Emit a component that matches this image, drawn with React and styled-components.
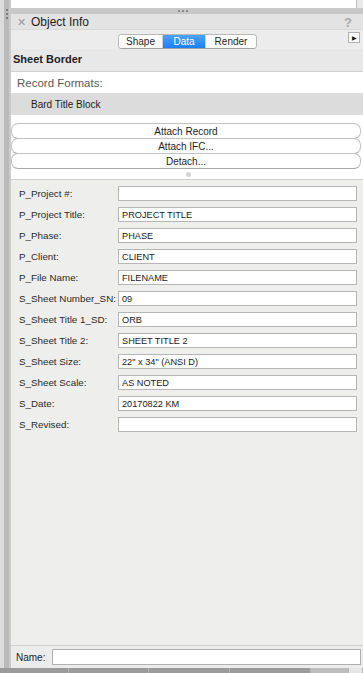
import React from 'react';
import styled, { createGlobalStyle } from 'styled-components';

const GlobalStyle = createGlobalStyle`
  html, body {
    margin: 0;
    padding: 0;
    background: #eeeeec;
  }
  body {
    font-family: "Liberation Sans", Arial, sans-serif;
    color: #222;
  }
`;

const Page = styled.div`
  width: 363px;
  height: 673px;
  display: flex;
  flex-direction: column;
  overflow: hidden;
`;

const Body = styled.div`
  flex: 1;
  display: flex;
  min-height: 0;
`;

const LeftRail = styled.div`
  width: 11px;
  flex-shrink: 0;
  background: linear-gradient(to right, #dcdcdc 0 4px, #bababa 4px 9px, #cbcbcb 9px 11px);
  display: flex;
  flex-direction: column;
  align-items: center;
  gap: 2px;
  padding-top: 9px;
  padding-left: 2px;
  box-sizing: border-box;
`;

const RailDot = styled.span`
  width: 2px;
  height: 2px;
  background: #7d7d7d;
`;

const Main = styled.div`
  flex: 1;
  display: flex;
  flex-direction: column;
  background: #eeeeec;
`;

const TopStub = styled.div`
  height: 8px;
  display: flex;
  background: #e9e9e9;
`;

const StubWhite = styled.div`
  width: 345px;
  background: #fff;
  border-right: 1px solid #bdbdbd;
`;

const Splitter = styled.div`
  height: 6px;
  background: #c8c8c8;
  display: flex;
  align-items: center;
  justify-content: center;
  gap: 2px;
  padding-right: 8px;
`;

const SplitDot = styled.span`
  width: 2px;
  height: 2px;
  background: #8a8a8a;
`;

const TitleBar = styled.div`
  height: 15px;
  display: flex;
  align-items: center;
  padding: 1px 11px 0 6px;
  box-sizing: border-box;
  background: #e3e3e3;
  font-size: 12px;
  color: #1e1e1e;
`;

const CloseMark = styled.span`
  font-size: 11px;
  color: #9a9a9a;
  width: 14px;
`;

const TitleText = styled.span`
  flex: 1;
`;

const HelpMark = styled.span`
  font-size: 13px;
  color: #a8a8a8;
  font-weight: bold;
`;

const TabRow = styled.div`
  height: 20px;
  display: flex;
  align-items: flex-end;
  justify-content: center;
  position: relative;
  background: #ececec;
  border-top: 1px solid #d9d9d9;
  box-sizing: border-box;
`;

const Segmented = styled.div`
  display: flex;
  height: 15px;
  margin-left: 1px;
  border: 1px solid #b8b8b8;
  border-bottom-color: #a2a2a2;
  border-radius: 4px;
  overflow: hidden;
  background: #fff;
  box-sizing: border-box;
`;

const Segment = styled.div`
  width: ${p => p.w}px;
  display: flex;
  align-items: center;
  justify-content: center;
  font-size: 10px;
  color: ${p => (p.active ? '#fff' : '#1e1e1e')};
  background: ${p => (p.active ? 'linear-gradient(#4fa1fb, #1b7ff8)' : '#fff')};
  border-left: ${p => (p.first ? 'none' : '1px solid #d0d0d0')};
`;

const CornerButton = styled.div`
  position: absolute;
  right: 3px;
  top: 2px;
  width: 10px;
  height: 9px;
  border: 1px solid #b0b0b0;
  background: #fafafa;
  font-size: 6px;
  display: flex;
  align-items: center;
  justify-content: center;
  color: #111;
`;

const SheetRow = styled.div`
  height: 23px;
  display: flex;
  align-items: center;
  padding: 0 0 3px 2px;
  box-sizing: border-box;
  font-size: 11px;
  font-weight: bold;
  background: #e8e8e8;
  border-bottom: 1px solid #d0d0d0;
`;

const RecordHeader = styled.div`
  height: 21px;
  display: flex;
  align-items: center;
  padding-left: 6px;
  background: #fff;
  font-size: 11.5px;
  color: #5a5a5a;
`;

const RecordItem = styled.div`
  height: 22px;
  display: flex;
  align-items: center;
  padding-left: 20px;
  background: #dcdcdc;
  font-size: 10px;
  color: #1e1e1e;
`;

const ButtonArea = styled.div`
  height: 65px;
  background: #fff;
  display: flex;
  flex-direction: column;
  padding-top: 8px;
  box-sizing: border-box;
  border-bottom: 1px solid #cdcdcd;
`;

const PillButton = styled.div`
  height: 16px;
  margin: -1px 2px 0 0;
  box-sizing: border-box;
  border: 1px solid #c2c2c2;
  border-bottom-color: #a8a8a8;
  border-radius: 7px;
  background: #fff;
  display: flex;
  align-items: center;
  justify-content: center;
  font-size: 10px;
  color: #1e1e1e;
  &:first-child {
    margin-top: 0;
  }
`;

const Knob = styled.span`
  align-self: center;
  width: 5px;
  height: 5px;
  border-radius: 50%;
  background: #d4d4d4;
  margin: 3px 0 0 2px;
`;

const Form = styled.div`
  flex: 1;
  display: flex;
  flex-direction: column;
  gap: 6px;
  padding: 6px 6px 0 8px;
  background: #eeeeec;
`;

const FieldRow = styled.div`
  height: 15px;
  display: flex;
  align-items: center;
`;

const FieldLabel = styled.span`
  width: 99px;
  flex-shrink: 0;
  font-size: 9.8px;
  color: #2a2a2a;
`;

const FieldInput = styled.div`
  flex: 1;
  height: 15px;
  box-sizing: border-box;
  border: 1px solid #b6b6b6;
  background: #fff;
  display: flex;
  align-items: center;
  padding-left: 3px;
  font-size: 9.2px;
  color: #1a1a1a;
  white-space: nowrap;
`;

const NameRow = styled.div`
  height: 23px;
  display: flex;
  align-items: center;
  gap: 7px;
  padding: 0 2px 0 5px;
  border-top: 1px solid #cfcfcf;
  background: #ececec;
  box-sizing: border-box;
`;

const NameLabel = styled.span`
  font-size: 10px;
  color: #1e1e1e;
`;

const NameInput = styled.div`
  flex: 1;
  height: 16px;
  box-sizing: border-box;
  border: 1px solid #b0b0b0;
  background: #fff;
`;

const BottomStrip = styled.div`
  height: 5px;
  display: flex;
  background: #9b9b9b;
`;

const StripTab = styled.span`
  width: ${p => p.w}px;
  background: ${p => p.bg || '#9b9b9b'};
  border-right: 1px solid #b4b4b4;
  box-sizing: border-box;
`;

const fields = [
  ['P_Project #:', ''],
  ['P_Project Title:', 'PROJECT TITLE'],
  ['P_Phase:', 'PHASE'],
  ['P_Client:', 'CLIENT'],
  ['P_File Name:', 'FILENAME'],
  ['S_Sheet Number_SN:', '09'],
  ['S_Sheet Title 1_SD:', 'ORB'],
  ['S_Sheet Title 2:', 'SHEET TITLE 2'],
  ['S_Sheet Size:', '22" x 34" (ANSI D)'],
  ['S_Sheet Scale:', 'AS NOTED'],
  ['S_Date:', '20170822 KM'],
  ['S_Revised:', ''],
];

const App = () => {
  return (
    <Page>
      <GlobalStyle />
      <Body>
        <LeftRail>
          <RailDot />
          <RailDot />
          <RailDot />
        </LeftRail>
        <Main>
          <TopStub>
            <StubWhite />
          </TopStub>
          <Splitter>
            <SplitDot />
            <SplitDot />
            <SplitDot />
          </Splitter>
          <TitleBar>
            <CloseMark>✕</CloseMark>
            <TitleText>Object Info</TitleText>
            <HelpMark>?</HelpMark>
          </TitleBar>
          <TabRow>
            <Segmented>
              <Segment w={43} first>Shape</Segment>
              <Segment w={42} active>Data</Segment>
              <Segment w={50}>Render</Segment>
            </Segmented>
            <CornerButton>▶</CornerButton>
          </TabRow>
          <SheetRow>Sheet Border</SheetRow>
          <RecordHeader>Record Formats:</RecordHeader>
          <RecordItem>Bard Title Block</RecordItem>
          <ButtonArea>
            <PillButton>Attach Record</PillButton>
            <PillButton>Attach IFC...</PillButton>
            <PillButton>Detach...</PillButton>
            <Knob />
          </ButtonArea>
          <Form>
            {fields.map(([label, value]) => (
              <FieldRow key={label}>
                <FieldLabel>{label}</FieldLabel>
                <FieldInput>{value}</FieldInput>
              </FieldRow>
            ))}
          </Form>
          <NameRow>
            <NameLabel>Name:</NameLabel>
            <NameInput />
          </NameRow>
        </Main>
      </Body>
      <BottomStrip>
        <StripTab w={69} />
        <StripTab w={80} />
        <StripTab w={81} />
        <StripTab w={81} />
        <StripTab w={38} bg="#bdbdbd" />
        <StripTab w={14} bg="#e6e6e6" />
      </BottomStrip>
    </Page>
  );
};

export default App;
